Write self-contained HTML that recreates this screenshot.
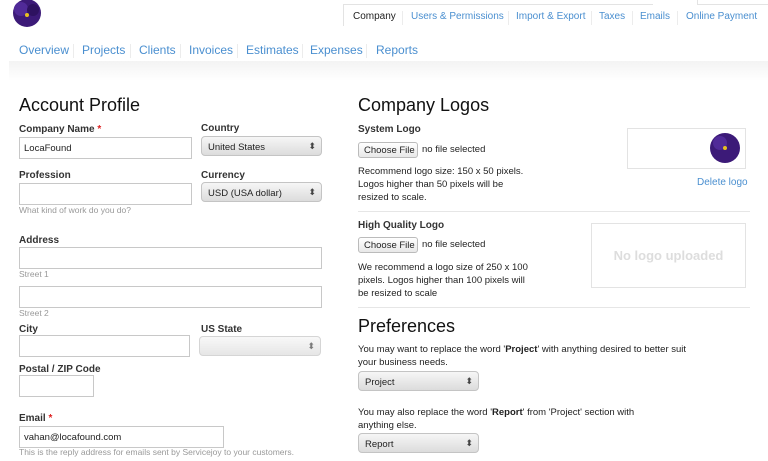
<!DOCTYPE html>
<html><head><meta charset="utf-8"><style>
*{box-sizing:border-box;margin:0;padding:0}
body{width:768px;height:461px;overflow:hidden;background:#fff;font-family:"Liberation Sans",Arial,sans-serif;position:relative;color:#222}
.a{position:absolute}
.lnk{color:#4a8fd0}
.nav span{position:absolute;font-size:12px;color:#4a8fd0}
.sep{position:absolute;width:1px;height:14px;background:#ececec}
.lbl{position:absolute;font-size:10px;font-weight:bold;color:#333}
.inp{position:absolute;border:1px solid #c8c8c8;background:#fff;font-size:9.5px;padding:5px 4px;color:#222;height:22px}
.sel{position:absolute;border:1px solid #c4c4c4;border-radius:4px;background:linear-gradient(#f6f6f6,#dcdcdc);font-size:9.5px;padding:5px 6px;color:#222;height:20px}
.sel:after{content:"⬍";position:absolute;right:5px;top:4px;font-size:9px;color:#444}
.hint{position:absolute;font-size:8.5px;color:#999}
.txt{position:absolute;font-size:9.5px;line-height:13px;color:#222}
.btn{position:absolute;border:1px solid #bbb;border-radius:3px;background:linear-gradient(#fff,#e8e8e8);font-size:9.5px;padding:2px 5px;height:16px;width:60px;text-align:center;white-space:nowrap}
h2{position:absolute;font-weight:normal;font-size:18px;color:#111}
.hr{position:absolute;height:1px;background:#e6e6e6}
</style></head><body>
<svg class="a" style="left:10px;top:0" width="34" height="30"><circle cx="17" cy="13" r="14" fill="#3c1a78"/><circle cx="11" cy="9" r="7" fill="#502a98"/><circle cx="23" cy="10" r="6" fill="#2e1260"/><circle cx="17" cy="15" r="2" fill="#e8c020"/></svg>
<div class="a" style="left:343px;top:4px;width:310px;height:1px;background:#e3e3e3"></div>
<div class="a" style="left:343px;top:4px;width:1px;height:22px;background:#e3e3e3"></div>
<div class="a" style="left:697px;top:4px;width:71px;height:1px;background:#e3e3e3"></div>
<div class="a" style="left:697px;top:0;width:1px;height:4px;background:#e3e3e3"></div>
<div class="nav">
<span style="left:353px;top:11px;font-size:10px;color:#222">Company</span><div class="sep" style="left:402px;top:11px"></div>
<span style="left:411px;top:11px;font-size:10px">Users &amp; Permissions</span><div class="sep" style="left:508px;top:11px"></div>
<span style="left:516px;top:11px;font-size:10px">Import &amp; Export</span><div class="sep" style="left:591px;top:11px"></div>
<span style="left:599px;top:11px;font-size:10px">Taxes</span><div class="sep" style="left:632px;top:11px"></div>
<span style="left:640px;top:11px;font-size:10px">Emails</span><div class="sep" style="left:677px;top:11px"></div>
<span style="left:686px;top:11px;font-size:10px">Online Payment</span>
<span style="left:19px;top:43px">Overview</span><div class="sep" style="left:73px;top:44px"></div>
<span style="left:82px;top:43px">Projects</span><div class="sep" style="left:130px;top:44px"></div>
<span style="left:139px;top:43px">Clients</span><div class="sep" style="left:180px;top:44px"></div>
<span style="left:189px;top:43px">Invoices</span><div class="sep" style="left:237px;top:44px"></div>
<span style="left:246px;top:43px">Estimates</span><div class="sep" style="left:302px;top:44px"></div>
<span style="left:310px;top:43px">Expenses</span><div class="sep" style="left:366px;top:44px"></div>
<span style="left:376px;top:43px">Reports</span>
</div>
<div class="a" style="left:9px;top:61px;width:759px;height:20px;background:linear-gradient(#f3f3f3,#fff)"></div>

<h2 style="left:19px;top:95px">Account Profile</h2>
<div class="lbl" style="left:19px;top:124px">Company Name <span style="color:#d22">*</span></div>
<div class="inp" style="left:19px;top:137px;width:173px">LocaFound</div>
<div class="lbl" style="left:201px;top:123px">Country</div>
<div class="sel" style="left:201px;top:136px;width:121px">United States</div>
<div class="lbl" style="left:19px;top:170px">Profession</div>
<div class="inp" style="left:19px;top:183px;width:173px"></div>
<div class="hint" style="left:19px;top:205px">What kind of work do you do?</div>
<div class="lbl" style="left:201px;top:170px">Currency</div>
<div class="sel" style="left:201px;top:182px;width:121px">USD (USA dollar)</div>
<div class="lbl" style="left:19px;top:235px">Address</div>
<div class="inp" style="left:19px;top:247px;width:303px"></div>
<div class="hint" style="left:19px;top:269px">Street 1</div>
<div class="inp" style="left:19px;top:286px;width:303px"></div>
<div class="hint" style="left:19px;top:308px">Street 2</div>
<div class="lbl" style="left:19px;top:324px">City</div>
<div class="inp" style="left:19px;top:335px;width:171px"></div>
<div class="lbl" style="left:201px;top:324px">US State</div>
<div class="sel" style="left:199px;top:336px;width:122px;opacity:.7"></div>
<div class="lbl" style="left:19px;top:364px">Postal / ZIP Code</div>
<div class="inp" style="left:19px;top:375px;width:75px"></div>
<div class="lbl" style="left:19px;top:413px">Email <span style="color:#d22">*</span></div>
<div class="inp" style="left:19px;top:426px;width:205px">vahan@locafound.com</div>
<div class="hint" style="left:19px;top:447px">This is the reply address for emails sent by Servicejoy to your customers.</div>

<h2 style="left:358px;top:95px">Company Logos</h2>
<div class="lbl" style="left:358px;top:124px">System Logo</div>
<div class="btn" style="left:358px;top:142px">Choose File</div>
<div class="txt" style="left:422px;top:143px">no file selected</div>
<div class="txt" style="left:358px;top:165px">Recommend logo size: 150 x 50 pixels.<br>Logos higher than 50 pixels will be<br>resized to scale.</div>
<div class="a" style="left:627px;top:128px;width:119px;height:41px;border:1px solid #e3e3e3"></div>
<svg class="a" style="left:708px;top:131px" width="34" height="34"><circle cx="17" cy="17" r="15" fill="#3c1a78"/><circle cx="12" cy="12" r="7" fill="#502a98"/><circle cx="17" cy="17" r="2" fill="#e8c020"/></svg>
<div class="a lnk" style="left:697px;top:177px;font-size:10px">Delete logo</div>
<div class="hr" style="left:358px;top:211px;width:392px"></div>
<div class="lbl" style="left:358px;top:220px">High Quality Logo</div>
<div class="btn" style="left:358px;top:237px">Choose File</div>
<div class="txt" style="left:422px;top:238px">no file selected</div>
<div class="txt" style="left:358px;top:261px">We recommend a logo size of 250 x 100<br>pixels. Logos higher than 100 pixels will<br>be resized to scale</div>
<div class="a" style="left:591px;top:223px;width:155px;height:65px;border:1px solid #e3e3e3;font-size:13px;font-weight:bold;color:#ddd;text-align:center;line-height:63px">No logo uploaded</div>
<div class="hr" style="left:358px;top:307px;width:392px"></div>
<h2 style="left:358px;top:316px">Preferences</h2>
<div class="txt" style="left:358px;top:343px;width:345px">You may want to replace the word '<b>Project</b>' with anything desired to better suit your business needs.</div>
<div class="sel" style="left:358px;top:371px;width:121px">Project</div>
<div class="txt" style="left:358px;top:406px;width:300px">You may also replace the word '<b>Report</b>' from 'Project' section with anything else.</div>
<div class="sel" style="left:358px;top:433px;width:121px">Report</div>
</body></html>
